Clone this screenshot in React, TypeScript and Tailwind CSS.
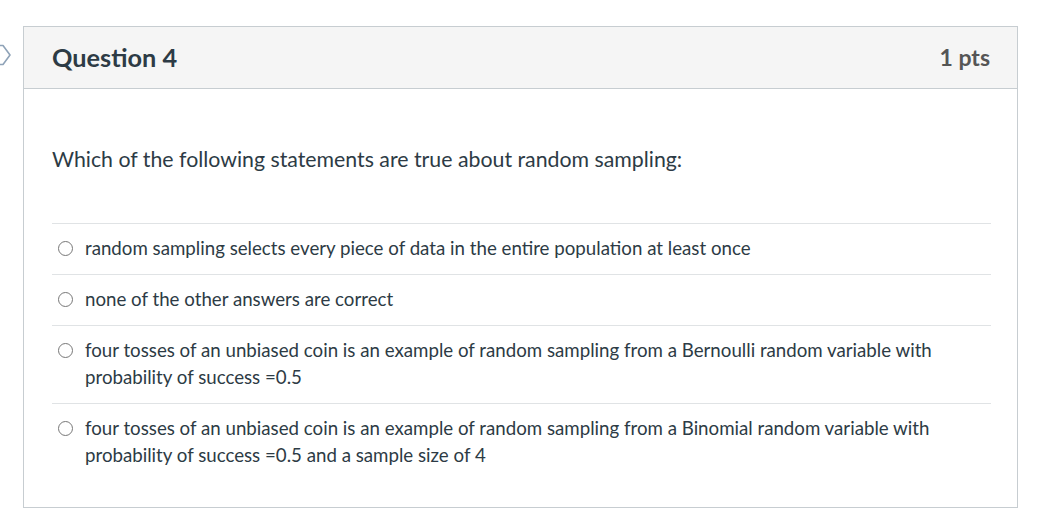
const answers = [
  "random sampling selects every piece of data in the entire population at least once",
  "none of the other answers are correct",
  "four tosses of an unbiased coin is an example of random sampling from a Bernoulli random variable with probability of success =0.5",
  "four tosses of an unbiased coin is an example of random sampling from a Binomial random variable with probability of success =0.5 and a sample size of 4",
]

export default function App() {
  return (
    <div className="relative h-[532px] w-[1052px] bg-white pt-[26px] pl-[23px] text-[#2d3b45]" style={{ fontFamily: "Lato, 'Noto Sans', sans-serif" }}>
      {/* flag marker, cut off at page edge */}
      <svg className="absolute left-[-12px] top-[44px]" width="24" height="22" viewBox="0 0 24 22" fill="none">
        <path d="M1 1.5 H15 L22 11 L15 20.5 H1 Z" stroke="#8fa3b8" strokeWidth="1.6" strokeLinejoin="round" />
      </svg>

      <div className="w-[995px] h-[482px] border border-[#c7cdd1] flex flex-col">
        <div className="h-[62px] bg-[#f5f5f5] border-b border-[#c7cdd1] flex items-center justify-between pl-[28px] pr-[27px]">
          <h2 className="text-[25.3px] font-bold leading-none">Question 4</h2>
          <span className="text-[23px] font-bold text-[#555] leading-none">1 pts</span>
        </div>

        <div className="pl-[28px] pr-[26px] pt-[56px]">
          <p className="text-[21.3px] leading-[28px] mb-[50px]">
            Which of the following statements are true about random sampling:
          </p>
          <div>
            {answers.map((a) => (
              <div key={a} className="flex border-t border-[#e0e3e5] pt-[11px] pb-[12px]">
                <span className="mt-[6px] ml-[6px] mr-[12px] h-[15px] w-[15px] shrink-0 rounded-full border border-[#777] bg-white" />
                <span className="text-[18.7px] leading-[27px] pr-[50px]">{a}</span>
              </div>
            ))}
          </div>
        </div>
      </div>
    </div>
  )
}
